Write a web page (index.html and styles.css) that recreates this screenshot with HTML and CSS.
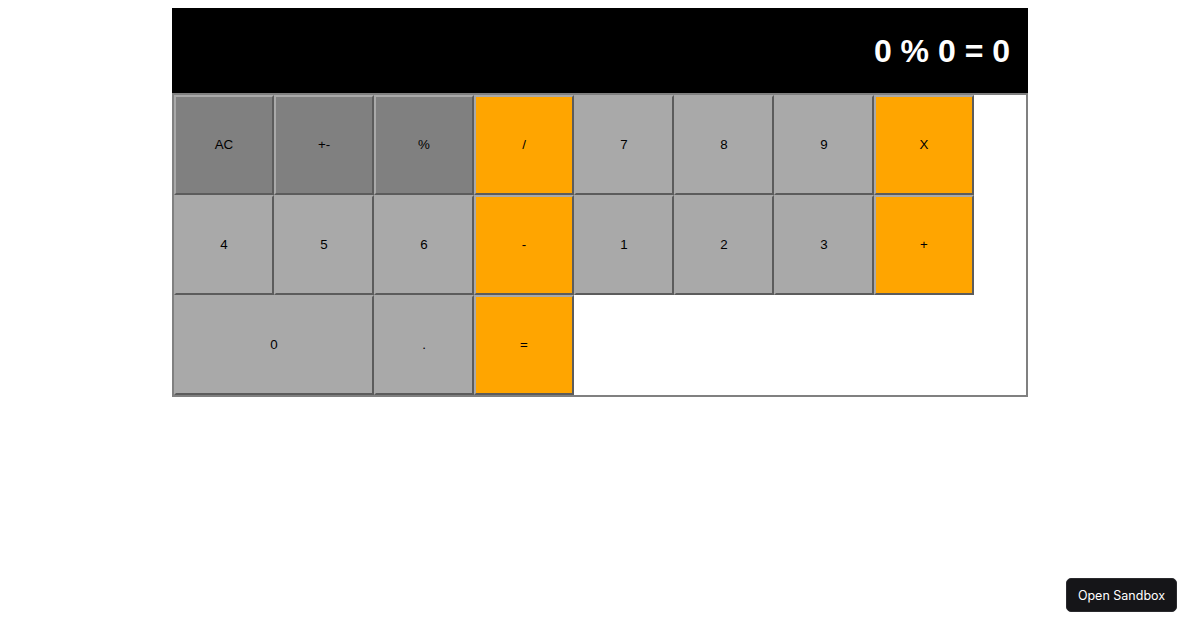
FILE: index.html
```html
<!DOCTYPE html>
<html>
<head>
<meta charset="utf-8">
<link rel="stylesheet" href="styles.css">
</head>
<body>
<div class="calc">
  <div class="display">0 % 0 = 0</div>
  <div class="keypad">
    <button class="key fn">AC</button>
    <button class="key fn">+-</button>
    <button class="key fn">%</button>
    <button class="key op">/</button>
    <button class="key">7</button>
    <button class="key">8</button>
    <button class="key">9</button>
    <button class="key op">X</button>
    <button class="key">4</button>
    <button class="key">5</button>
    <button class="key">6</button>
    <button class="key op">-</button>
    <button class="key">1</button>
    <button class="key">2</button>
    <button class="key">3</button>
    <button class="key op">+</button>
    <button class="key wide">0</button>
    <button class="key">.</button>
    <button class="key op">=</button>
  </div>
</div>
<button class="sandbox">Open Sandbox</button>
</body>
</html>
```

FILE: styles.css
```css
html, body {
  margin: 0;
  padding: 0;
  background: #ffffff;
}
body {
  padding-top: 8px;
  font-family: "Liberation Sans", Arial, sans-serif;
}
.calc {
  width: 856px;
  margin: 0 auto;
}
.display {
  height: 85px;
  background: #000000;
  color: #ffffff;
  font-weight: bold;
  font-size: 32px;
  display: flex;
  align-items: center;
  justify-content: flex-end;
  padding-right: 18px;
  box-sizing: border-box;
  padding-top: 2px;
}
.keypad {
  border: 2px solid #808080;
  display: flex;
  flex-wrap: wrap;
  align-content: flex-start;
  height: 304px;
  box-sizing: border-box;
}
.key {
  width: 100px;
  height: 100px;
  box-sizing: border-box;
  margin: 0;
  padding: 0 0 2px 0;
  border-style: solid;
  border-width: 2px;
  border-color: #a9a9a9 #5c5c5c #5c5c5c #a9a9a9;
  background: #a9a9a9;
  color: #000000;
  font-family: "Liberation Sans", Arial, sans-serif;
  font-size: 13.33px;
}
.key.fn {
  background: #808080;
}
.key.op {
  background: #ffa500;
}
.key.wide {
  width: 200px;
}
.sandbox {
  position: fixed;
  right: 23px;
  bottom: 18px;
  width: 111px;
  height: 34px;
  background: #151518;
  color: #ffffff;
  border: 1px solid #2a2a2e;
  border-radius: 5px;
  font-family: Inter, "Liberation Sans", sans-serif;
  font-size: 12.5px;
  padding: 0;
}
```
